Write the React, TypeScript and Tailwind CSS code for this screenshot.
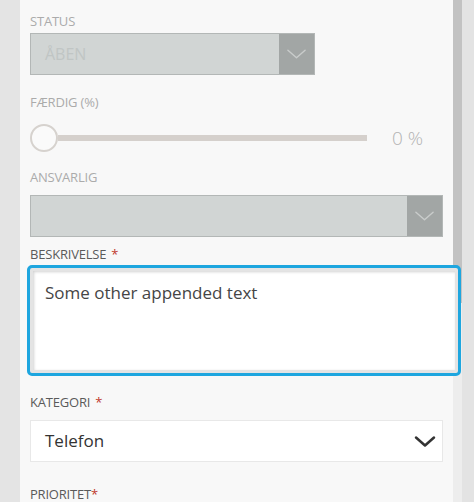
import React from 'react';

function Chevron({ className }: { className: string }) {
  return (
    <svg className={className} viewBox="0 0 22 12" fill="none" stroke="currentColor" strokeLinecap="round" strokeLinejoin="round">
      <path d="M2 2l9 8 9-8" />
    </svg>
  );
}

function Label({ text, required, muted, tight }: { text: string; required?: boolean; muted?: boolean; tight?: boolean }) {
  return (
    <div className={`text-[13px] leading-[16px] uppercase tracking-[-0.2px] ${muted ? 'text-[#ababab]' : 'text-[#5a5a5a]'}`}>
      {text}
      {required && <span className={`text-[#c0392b] ${tight ? '' : 'ml-[5px]'}`}>*</span>}
    </div>
  );
}

export default function App() {
  return (
    <div className="w-[474px] h-[502px] flex overflow-hidden bg-[#e3e3e3]" style={{ fontFamily: '"Open Sans", "Liberation Sans", sans-serif' }}>
      {/* left gutter */}
      <div className="w-[20px] shrink-0 bg-[#e4e4e4]" />

      {/* form panel */}
      <div className="w-[433px] shrink-0 bg-[#f8f8f8] px-[10px] pt-[13px] flex flex-col">
        <Label text="Status" muted />
        <div className="mt-[4px] w-[285px] h-[42px] flex border border-[#b3b7b6] bg-[#d1d5d4]">
          <div className="flex-1 flex items-center pl-[14px] text-[16px] text-[#c0c5c4] uppercase">Åben</div>
          <div className="w-[35px] flex items-center justify-center bg-[#a2a6a5]">
            <Chevron className="w-[21px] h-[12px] text-[#c9cccb] stroke-[1.5]" />
          </div>
        </div>

        <div className="mt-[19px]">
          <Label text="Færdig (%)" muted />
        </div>
        <div className="mt-[14px] flex items-center h-[28px]">
          <div className="flex-1 flex items-center">
            <div className="w-[28px] h-[28px] rounded-full border-2 border-[#d6d2ce] bg-[#fafafa] shrink-0" />
            <div className="flex-1 h-[6px] bg-[#d5d0cc]" />
          </div>
          <div className="w-[76px] pl-[25px] text-[19px] font-light text-[#b3b3b3] leading-[28px]">0 %</div>
        </div>

        <div className="mt-[17px]">
          <Label text="Ansvarlig" muted />
        </div>
        <div className="mt-[10px] h-[42px] flex border border-[#b3b7b6] bg-[#d1d5d4]">
          <div className="flex-1" />
          <div className="w-[35px] flex items-center justify-center bg-[#a2a6a5]">
            <Chevron className="w-[21px] h-[12px] text-[#c9cccb] stroke-[1.5]" />
          </div>
        </div>

        <div className="mt-[9px]">
          <Label text="Beskrivelse" required />
        </div>
        <div className="relative z-10 mt-[3px] ml-[-3px] w-[434px] h-[112px] rounded-[5px] border-[3px] border-[#1ea6df] bg-[#e4e4e4] p-[3px]">
          <div className="w-full h-full bg-white shadow-[inset_1px_1px_3px_rgba(0,0,0,0.18)] px-[12px] pt-[10px] text-[17px] leading-[24px] text-[#454545]">
            Some other appended text
          </div>
        </div>

        <div className="mt-[18px]">
          <Label text="Kategori" required />
        </div>
        <div className="mt-[10px] h-[42px] flex items-center border border-[#e8e8e8] bg-white pl-[14px] pr-[6px]">
          <div className="flex-1 text-[17px] text-[#333]">Telefon</div>
          <Chevron className="w-[22px] h-[13px] text-[#333] stroke-[2.5]" />
        </div>

        <div className="mt-[24px]">
          <Label text="Prioritet" required tight />
        </div>
      </div>

      {/* scrollbar */}
      <div className="w-[9px] shrink-0 flex flex-col bg-[#ededed]">
        <div className="h-[303px] bg-[#c2c2c2]" />
      </div>
      <div className="flex-1 bg-[#e3e3e3]" />
    </div>
  );
}
